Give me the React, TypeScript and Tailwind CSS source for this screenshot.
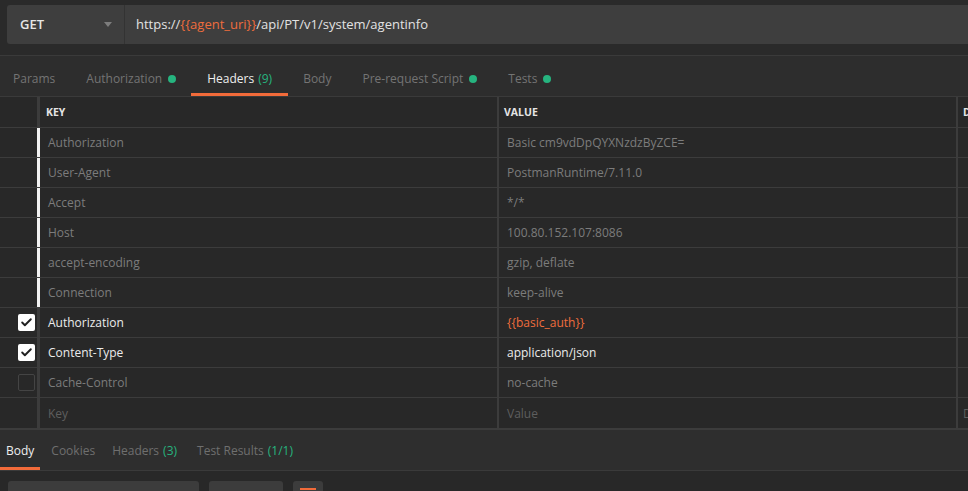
import { Check } from "lucide-react";

type HeaderRow = {
  key: string;
  value: string;
  state: "auto" | "on" | "off" | "empty";
  orange?: boolean;
};

const rows: HeaderRow[] = [
  { key: "Authorization", value: "Basic cm9vdDpQYXNzdzByZCE=", state: "auto" },
  { key: "User-Agent", value: "PostmanRuntime/7.11.0", state: "auto" },
  { key: "Accept", value: "*/*", state: "auto" },
  { key: "Host", value: "100.80.152.107:8086", state: "auto" },
  { key: "accept-encoding", value: "gzip, deflate", state: "auto" },
  { key: "Connection", value: "keep-alive", state: "auto" },
  { key: "Authorization", value: "{{basic_auth}}", state: "on", orange: true },
  { key: "Content-Type", value: "application/json", state: "on" },
  { key: "Cache-Control", value: "no-cache", state: "off" },
  { key: "Key", value: "Value", state: "empty" },
];

const requestTabs = [
  { label: "Params" },
  { label: "Authorization", dot: true },
  { label: "Headers", count: "(9)", active: true },
  { label: "Body" },
  { label: "Pre-request Script", dot: true },
  { label: "Tests", dot: true },
];

const responseTabs = [
  { label: "Body", active: true },
  { label: "Cookies" },
  { label: "Headers", count: "(3)" },
  { label: "Test Results", count: "(1/1)", spaced: true },
];

const textColor = (row: HeaderRow) => {
  if (row.state === "on") return "text-[#ececec]";
  if (row.state === "empty") return "text-[#5e5e5e]";
  return "text-[#7c7c7c]";
};

export default function App() {
  return (
    <div className="w-[968px] h-[491px] overflow-hidden bg-[#282828] font-['Open_Sans',sans-serif] text-[12px]">
      {/* URL bar */}
      <div className="h-[56px] bg-[#2a2a2a] pt-[5px] pl-[7px] border-b border-[#3a3a3a]">
        <div className="h-[39px] flex bg-[#3e3e3e] rounded-l-[3px]">
          <div className="w-[118px] flex items-center justify-between pl-[13px] pr-[12px] border-r border-[#333333]">
            <span className="text-[13px] font-semibold text-[#e6e6e6]">GET</span>
            <svg width="8" height="5" viewBox="0 0 8 5">
              <path d="M0 0h8L4 5z" fill="#7d7d7d" />
            </svg>
          </div>
          <div className="flex items-center pl-[11px] text-[13px] text-[#e2e2e2]">
            https://<span className="text-[#ef6d3d]">{"{{agent_uri}}"}</span>/api/PT/v1/system/agentinfo
          </div>
        </div>
      </div>

      {/* Request tabs */}
      <div className="h-[41px] bg-[#2d2d2d] border-b border-[#3a3a3a] flex pl-[13px] gap-[31px]">
        {requestTabs.map((tab, i) => (
          <div key={i} className="relative h-full flex items-center pt-[5px]">
            <span className={tab.active ? "text-[#eeeeee]" : "text-[#747474]"}>{tab.label}</span>
            {tab.count && <span className="ml-[4px] text-[#26b47f]">{tab.count}</span>}
            {tab.dot && <span className="ml-[6px] w-[8px] h-[8px] rounded-full bg-[#26b47f]" />}
            {tab.active && <span className="absolute -left-[16px] -right-[16px] bottom-0 h-[3px] bg-[#f26b3a]" />}
          </div>
        ))}
      </div>

      {/* Headers table */}
      <div className="border-b-2 border-[#3c3c3c]">
        <div className="h-[31px] flex border-b border-[#3c3c3c] text-[10.5px] font-bold text-[#e4e4e4]">
          <div className="w-[37px]" />
          <div className="w-[460px] flex items-center pl-[6px] pt-[1px] border-l-[3px] border-[#3c3c3c]">KEY</div>
          <div className="w-[459px] flex items-center pl-[5px] pt-[1px] border-l-2 border-[#3c3c3c]">VALUE</div>
          <div className="flex-1 flex items-center pl-[5px] pt-[1px] border-l-2 border-[#3c3c3c] overflow-hidden whitespace-nowrap">DESCRIPTION</div>
        </div>
        {rows.map((row, i) => (
          <div key={i} className={`h-[30px] flex ${i < rows.length - 1 ? "border-b border-[#3c3c3c]" : ""}`}>
            <div className="w-[37px] flex items-center pl-[18px]">
              {row.state === "on" && (
                <span className="w-[17px] h-[17px] rounded-[2px] bg-white flex items-center justify-center">
                  <Check size={13} strokeWidth={3.5} color="#202020" />
                </span>
              )}
              {row.state === "off" && (
                <span className="w-[17px] h-[17px] rounded-[2px] border border-[#444444]" />
              )}
            </div>
            <div
              className={`w-[460px] flex items-center pl-[8px] pt-[1px] border-l-[3px] ${
                row.state === "auto" ? "border-[#f2f2f2]" : "border-[#3c3c3c]"
              } ${textColor(row)}`}
            >
              {row.key}
            </div>
            <div
              className={`w-[459px] flex items-center pl-[8px] pt-[1px] border-l-2 border-[#3c3c3c] ${
                row.orange ? "text-[#ef6d3d]" : textColor(row)
              }`}
            >
              {row.value}
            </div>
            <div className="flex-1 flex items-center pl-[5px] pt-[1px] border-l-2 border-[#3c3c3c] text-[#5e5e5e] overflow-hidden whitespace-nowrap">
              {row.state === "empty" ? "Description" : ""}
            </div>
          </div>
        ))}
      </div>

      {/* Response tabs */}
      <div className="h-[41px] bg-[#2e2e2e] border-b border-[#3a3a3a] flex gap-[5px]">
        {responseTabs.map((tab, i) => (
          <div
            key={i}
            className={`h-full flex items-center px-[6px] pt-[5px] border-b-[3px] ${
              tab.active ? "border-[#f26b3a]" : "border-transparent"
            } ${tab.spaced ? "ml-[3px]" : ""}`}
          >
            <span className={tab.active ? "text-[#eeeeee]" : "text-[#6f6f6f]"}>{tab.label}</span>
            {tab.count && <span className="ml-[4px] text-[#26b47f]">{tab.count}</span>}
          </div>
        ))}
      </div>

      {/* Response toolbar */}
      <div className="flex pt-[10px] pl-[8px] gap-[10px]">
        <div className="w-[191px] h-[20px] bg-[#3c3c3c] rounded-t-[3px]" />
        <div className="w-[74px] h-[20px] bg-[#3c3c3c] rounded-t-[3px]" />
        <div className="w-[30px] h-[20px] bg-[#3c3c3c] rounded-t-[3px] flex justify-center pt-[7px]">
          <span className="w-[16px] h-[2px] bg-[#f26b3a]" />
        </div>
      </div>
    </div>
  );
}
